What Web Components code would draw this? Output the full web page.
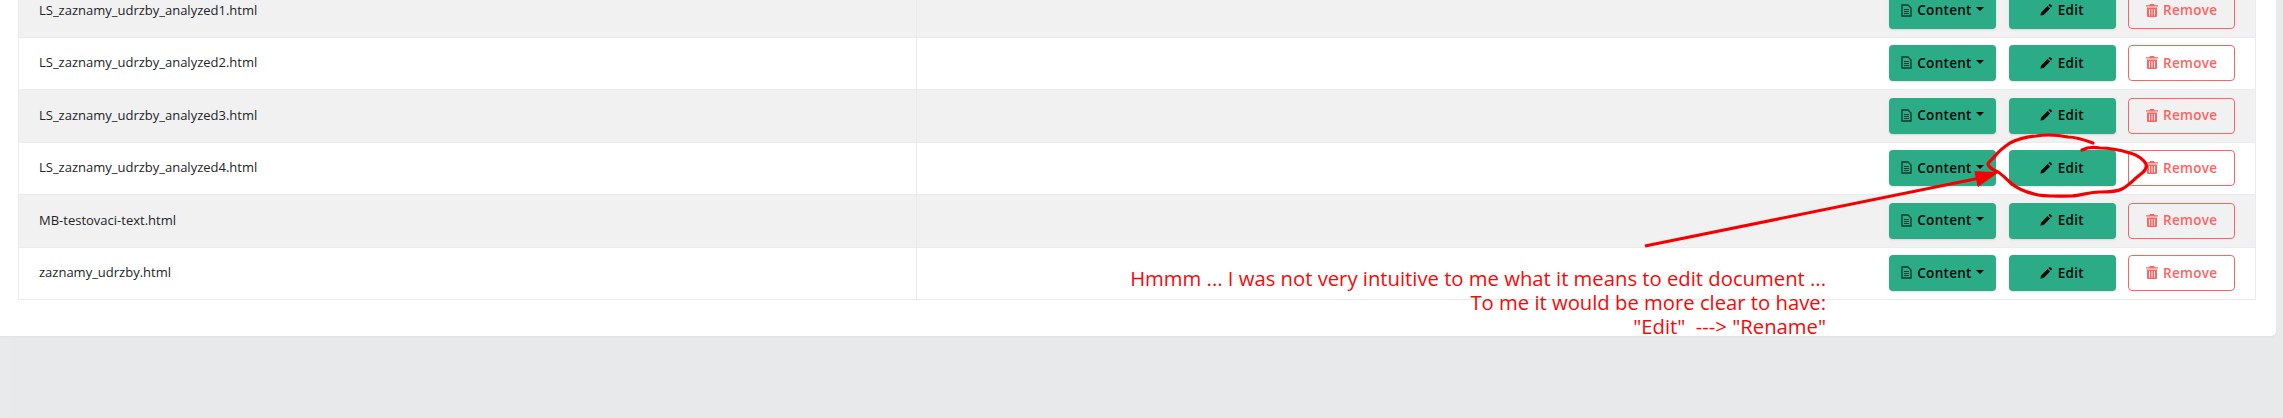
<!DOCTYPE html>
<html>
<head>
<meta charset="utf-8">
<title>Documents</title>
<style>
  html, body { margin: 0; height: 100%; }
  body { background: linear-gradient(90deg, #e9eaec 10px, #e8e9eb 10px); overflow: hidden; position: relative; font-family: "Open Sans", sans-serif; }
</style>
</head>
<body>
<doc-card>
  <doc-row name="LS_zaznamy_udrzby_analyzed1.html" striped></doc-row>
  <doc-row name="LS_zaznamy_udrzby_analyzed2.html"></doc-row>
  <doc-row name="LS_zaznamy_udrzby_analyzed3.html" striped></doc-row>
  <doc-row name="LS_zaznamy_udrzby_analyzed4.html"></doc-row>
  <doc-row name="MB-testovaci-text.html" striped></doc-row>
  <doc-row name="zaznamy_udrzby.html"></doc-row>
</doc-card>
<review-note>
  <div>Hmmm ... I was not very intuitive to me what it means to edit document ...</div>
  <div>To me it would be more clear to have:</div>
  <div>"Edit"&nbsp; ---&gt; "Rename"</div>
</review-note>

<script>
  class DocCard extends HTMLElement {
    constructor() {
      super();
      this.root = this.attachShadow({mode: 'open'});
      this.root.innerHTML = `<style>
        :host { display: block; width: 2276px; height: 336px; background: #fff; overflow: hidden;
          border-radius: 0 0 5px 0; box-shadow: 0 1px 2px rgba(0,0,0,.04); }
        .table { margin: -16px 20px 0 18px; border: solid #e9ebee; border-width: 0 1px 1px 1px; }
      </style>
      <div class="table"><slot></slot></div>`
    }
  }
  window.customElements.define('doc-card', DocCard);

  class DocButton extends HTMLElement {
    constructor() {
      super();
      this.root = this.attachShadow({mode: 'open'});
      this.root.innerHTML = `<style>
        :host { display: flex; align-items: center; justify-content: center; gap: 5.5px;
          width: 107px; height: 36px; box-sizing: border-box; border-radius: 4px; padding-bottom: 1px;
          font: 600 13.5px "Open Sans", sans-serif; letter-spacing: .3px; white-space: nowrap; }
        :host([kind="green"]) { background: #2bab86; color: #020807; box-shadow: 0 1px 2px rgba(0,0,0,.12); }
        :host([kind="outline"]) { border: 1px solid #ff6262; color: #ff6262; }
        ::slotted(svg) { display: block; flex: none; }
      </style>
      <slot></slot>`
    }
  }
  window.customElements.define('doc-button', DocButton);

  class DocRow extends HTMLElement {
    constructor() {
      super();
      this.root = this.attachShadow({mode: 'open'});
      this.root.innerHTML = `<style>
        :host { display: flex; height: 52.5px; box-sizing: border-box; border-top: 1px solid #e9ebee;
          background: #fff; color: #212529; font: 13px "Open Sans", sans-serif; }
        :host([striped]) { background: #f1f1f1; }
        .name { width: 898px; box-sizing: border-box; padding: 0 20px 2px; display: flex; align-items: center;
          border-right: 1px solid #e9ebee; }
        .actions { flex: 1; display: flex; justify-content: flex-end; align-items: center; gap: 12.5px; padding-right: 20px; }
        .caret { width: 0; height: 0; border: 4px solid transparent; border-top: 4.500px solid #020807; border-bottom: 0; margin: -2px 0 0 -1px; }
        svg { display: block; flex: none; }
      </style>
      <div class="name">${this.getAttribute('name')}</div>
      <div class="actions">
        <doc-button kind="green">
          <svg width="11" height="13" viewBox="0 0 11 13" fill="none" stroke="#0b3a2d" stroke-width="1.3"><path d="M1 1h6l3 3v8H1z"/><path d="M3 5.500h5M3 7.500h5M3 9.500h5" stroke-width="1"/></svg>
          <span>Content</span><span class="caret"></span>
        </doc-button>
        <doc-button kind="green">
          <svg width="12" height="12" viewBox="0 0 12 12" fill="#020807"><path d="M.4 11.600l.7-3.200L7.600 1.900l2.500 2.500-6.500 6.500zM8.400 1.100l.7-.7a1 1 0 0 1 1.400 0l1.100 1.100a1 1 0 0 1 0 1.400l-.7.7z"/></svg>
          <span>Edit</span>
        </doc-button>
        <doc-button kind="outline">
          <svg width="12" height="13" viewBox="0 0 12 13" fill="#ff6262"><path d="M4 0h4l.6 1.200H12v1.400H0V1.200h3.400zM1 3.500h10V12a1 1 0 0 1-1 1H2a1 1 0 0 1-1-1zM3 5v6.500h1V5zM5.500 5v6.500h1V5zM8 5v6.500h1V5z" fill-rule="evenodd"/></svg>
          <span>Remove</span>
        </doc-button>
      </div>`
    }
  }
  window.customElements.define('doc-row', DocRow);

  // the red scribble and text somebody put over the screenshot
  class ReviewNote extends HTMLElement {
    constructor() {
      super();
      this.root = this.attachShadow({mode: 'open'});
      this.root.innerHTML = `<style>
        :host { position: absolute; left: 0; top: 0; width: 2283px; height: 418px; pointer-events: none; display: block; }
        svg { position: absolute; left: 0; top: 0; }
        .text { position: absolute; right: 457px; top: 265.500px; text-align: right; color: #f80808;
          font: 20.250px/24.300px "Open Sans", sans-serif; white-space: nowrap; }
      </style>
      <svg width="2283" height="418" viewBox="0 0 2283 418" fill="none" stroke="#f40000" stroke-width="3.200" stroke-linecap="round" stroke-linejoin="round">
        <path d="M2093 143C2082 139 2075 137 2068 137C2058 135 2048 134 2036 136C2026 137 2016 140 2010 143C2004 147 1999 151 1995 156C1992 160 1988 162 1988 164C1989 168 1993 170 1998 172C2003 175 2006 179 2012 184C2018 189 2026 192 2034 194C2044 197 2058 196 2072 196C2082 195 2090 192 2100 192C2108 192 2116 192 2122 189C2130 185 2135 178 2141 174C2146 170 2147 167 2146 164C2144 160 2138 155 2130 153C2120 150 2110 148 2100 148C2094 147 2088 147 2082 150"/>
        <path d="M1645 246L1980 178" stroke-width="3" stroke-linecap="butt"/>
        <path d="M1997 172.700L1975 171.700L1978 186z" fill="#f40000" stroke-width="1"/>
      </svg>
      <div class="text"><slot></slot></div>`
    }
  }
  window.customElements.define('review-note', ReviewNote);
</script>
</body>
</html>
